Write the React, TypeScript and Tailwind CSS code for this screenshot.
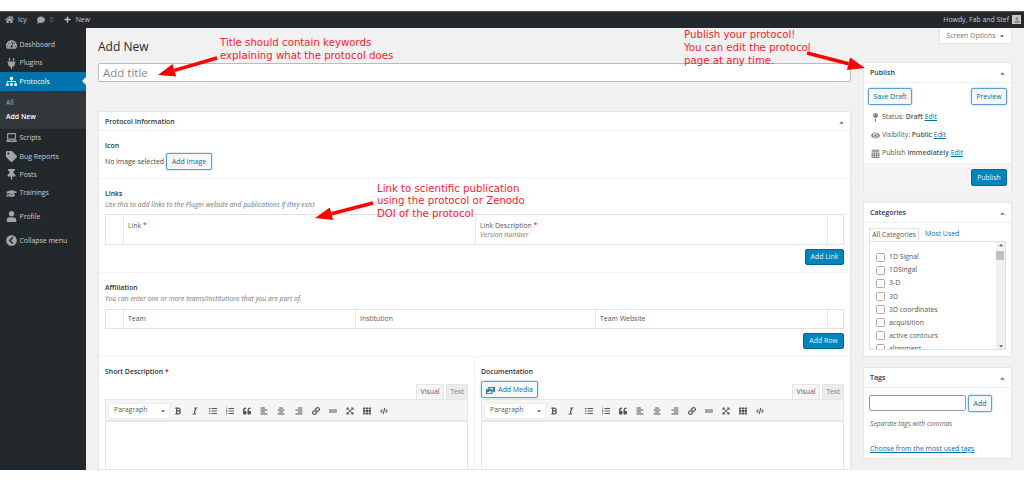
import React from "react";
import {
  FaHome, FaComment, FaPlus, FaTachometerAlt, FaPlug, FaSitemap, FaLaptop, FaTag, FaThumbtack,
  FaGraduationCap, FaUser, FaChevronCircleLeft, FaBold, FaItalic, FaListUl, FaListOl, FaQuoteLeft,
  FaAlignLeft, FaAlignCenter, FaAlignRight, FaLink, FaExpandArrowsAlt, FaTh, FaCode, FaMapPin, FaEye,
  FaCalendarAlt, FaPhotoVideo, FaCaretUp, FaCaretDown, FaGripLines,
} from "react-icons/fa";

type IconT = React.ComponentType<{ className?: string }>;

function MenuItem({ icon: Icon, label, active, className = "" }: { icon: IconT; label: string; active?: boolean; className?: string }) {
  return (
    <div className={`relative flex h-[18.4px] items-center pl-[4px] ${active ? "bg-[#0073aa] text-white" : "text-[#c9cdd0]"} ${className}`}>
      <span className="flex w-[15px] justify-center"><Icon className={`h-[11px] w-[11px] ${active ? "text-white" : "text-[#a0a5aa]"}`} /></span>
      <span className="ml-[.5px] pt-[1px]">{label}</span>
      {active && <span className="absolute right-0 top-[5px] h-0 w-0 border-y-[4px] border-r-[4px] border-y-transparent border-r-[#f1f1f1]" />}
    </div>
  );
}

function OutlineBtn({ children, className = "" }: { children: React.ReactNode; className?: string }) {
  return <div className={`flex h-[17px] items-center justify-center rounded-[2px] border border-[#5b9dd9] bg-[#f7f7f7] pt-[1px] text-[6.9px] text-[#0071a1] shadow-[0_0_2px_rgba(30,140,190,.6)] ${className}`}>{children}</div>;
}

function PrimaryBtn({ children, className = "" }: { children: React.ReactNode; className?: string }) {
  return <div className={`flex h-[16px] items-center justify-center rounded-[2px] border border-[#006799] bg-[#0085ba] pt-[1px] text-[6.9px] text-[#e8f4fa] ${className}`}>{children}</div>;
}

function SideBox({ title, className = "", children }: { title: string; className?: string; children: React.ReactNode }) {
  return (
    <section className={`border border-[#e5e5e5] bg-white ${className}`}>
      <header className="flex h-[20px] items-center justify-between border-b border-[#eeeeee] pl-[6px] pr-[5px] pt-[2px] text-[7px] font-semibold text-[#32373c]">
        <span>{title}</span><FaCaretUp className="h-[7px] w-[7px] text-[#72777c]" />
      </header>
      {children}
    </section>
  );
}

function Toolbar() {
  const icons: IconT[] = [FaBold, FaItalic, FaListUl, FaListOl, FaQuoteLeft, FaAlignLeft, FaAlignCenter, FaAlignRight, FaLink, FaGripLines, FaExpandArrowsAlt, FaTh, FaCode];
  return (
    <div className="flex h-[22px] items-center gap-[9.2px] border-b-2 border-[#e5e5e5] bg-[#f5f5f5] pl-[3px] pr-1 pt-[1px]">
      <div className="mr-[-4px] flex h-[14px] w-[60px] shrink-0 items-center justify-between bg-white pl-[5px] pr-[3px] text-[6.9px] text-[#555d66] shadow-[0_0_1px_#ccc]">
        <span>Paragraph</span><FaCaretDown className="h-[6px] w-[6px]" />
      </div>
      {icons.map((I, i) => <I key={i} className="h-[8px] w-[8px] shrink-0 text-[#50575e]" />)}
    </div>
  );
}

function Editor({ media }: { media?: boolean }) {
  return (
    <div className="flex min-w-0 flex-1 flex-col">
      <div className="flex h-[18px] justify-between">
        {media ? (
          <OutlineBtn className="h-[16px] w-[57px] gap-[3px] text-[#0073aa]"><FaPhotoVideo className="h-[9px] w-[9px]" />Add Media</OutlineBtn>
        ) : <span />}
        <div className="flex items-end gap-[2px] self-end">
          <div className="flex h-[15px] w-[28px] items-center justify-center border border-b-0 border-[#e5e5e5] bg-[#f5f5f5] pt-[1px] text-[6.9px] text-[#555d66]">Visual</div>
          <div className="flex h-[15px] w-[22px] items-center justify-center border border-b-0 border-[#e5e5e5] bg-[#ebebeb] pt-[1px] text-[6.9px] text-[#72777c]">Text</div>
        </div>
      </div>
      <div className="h-[72px] border border-[#e5e5e5] bg-white"><Toolbar /></div>
    </div>
  );
}

function Repeater({ cols, tall }: { cols: { w: string; label: string; req?: boolean; sub?: string }[]; tall?: boolean }) {
  return (
    <div className={`flex ${tall ? "h-[31px]" : "h-[20px]"} border border-[#e1e1e1] bg-white text-[6.9px] text-[#555]`}>
      <div className="w-[17px] shrink-0" />
      {cols.map((c) => (
        <div key={c.label} className={`${c.w} shrink-0 border-l border-[#e8e8e8] pl-[4px] ${tall ? "pt-[6px]" : "flex items-center pt-[1px]"}`}>
          <div>{c.label}{c.req && <span className="text-[#e00]"> *</span>}</div>
          {c.sub && <div className="mt-[-1px] italic text-[#777]">{c.sub}</div>}
        </div>
      ))}
      <div className="flex-1 border-l border-[#e8e8e8]" />
    </div>
  );
}

const cats = ["1D Signal", "1DSingal", "3-D", "3D", "3D coordinates", "acquisition", "active contours", "alignment"];

function Arrow({ x1, y1, x2, y2 }: { x1: number; y1: number; x2: number; y2: number }) {
  const a = Math.atan2(y2 - y1, x2 - x1);
  const bx = x2 - 17 * Math.cos(a), by = y2 - 17 * Math.sin(a);
  const px = -Math.sin(a) * 6.5, py = Math.cos(a) * 6.5;
  return (
    <g>
      <line x1={x1} y1={y1} x2={bx} y2={by} stroke="#f00" strokeWidth={3.4} />
      <polygon points={`${x2},${y2} ${bx + px},${by + py} ${bx - px},${by - py}`} fill="#f00" />
    </g>
  );
}

function Note({ className, lines }: { className: string; lines: string[] }) {
  return (
    <div className={`absolute whitespace-nowrap font-['DejaVu_Sans',sans-serif] text-[10.2px] leading-[12.8px] text-[#f5222d] ${className}`}>
      {lines.map((l) => <div key={l}>{l}</div>)}
    </div>
  );
}

const sectionTitle = "text-[6.9px] font-semibold leading-[12px] text-[#333]";
const hint = "text-[6.75px] italic leading-[10px] text-[#777]";

export default function App() {
  return (
    <div className="relative h-[482px] w-[1024px] overflow-hidden bg-white pt-[11px] font-['Open_Sans',sans-serif] text-[6.9px] text-[#444]">
      <div className="flex h-[17px] items-center justify-between border-t border-[#555] bg-[#23282d] pl-[5px] pr-[3px] text-[6.9px] text-[#c8cacc]">
        <div className="flex items-center">
          <FaHome className="h-[9px] w-[9px] text-[#a0a5aa]" /><span className="ml-[4px] pt-[1px]">Icy</span>
          <FaComment className="ml-[10px] h-[8px] w-[8px] text-[#a0a5aa]" /><span className="ml-[5px] pt-[1px] text-[#72777c]">0</span>
          <FaPlus className="ml-[10px] h-[7px] w-[7px] text-[#c8cacc]" /><span className="ml-[5px] pt-[1px]">New</span>
        </div>
        <div className="flex items-center gap-[3px]">
          <span className="pt-[1px]">Howdy, Fab and Stef</span>
          <span className="flex h-[9px] w-[9px] items-center justify-center bg-[#c9c9c9]"><FaUser className="h-[6px] w-[6px] text-[#8d8d8d]" /></span>
        </div>
      </div>
      <div className="flex h-[442px]">
        <aside className="w-[86px] shrink-0 bg-[#23282d] pt-[7.5px] text-[6.9px]">
          <MenuItem icon={FaTachometerAlt} label="Dashboard" />
          <MenuItem icon={FaPlug} label="Plugins" />
          <MenuItem icon={FaSitemap} label="Protocols" active />
          <div className="flex h-[38px] flex-col gap-[4px] bg-[#32373c] pl-[6px] pt-[7px]">
            <div className="text-[#a8abae]">All</div>
            <div className="font-semibold text-white">Add New</div>
          </div>
          <MenuItem icon={FaLaptop} label="Scripts" />
          <MenuItem icon={FaTag} label="Bug Reports" />
          <MenuItem icon={FaThumbtack} label="Posts" />
          <MenuItem icon={FaGraduationCap} label="Trainings" />
          <MenuItem icon={FaUser} label="Profile" className="mt-[5.5px]" />
          <MenuItem icon={FaChevronCircleLeft} label="Collapse menu" className="mt-[5.5px]" />
        </aside>
        <main className="flex min-w-0 flex-1 gap-[12px] bg-[#f1f1f1] px-[12px]">
          <div className="w-[753px] shrink-0 pt-[10px]">
            <h1 className="flex h-[18px] items-center text-[12px] font-normal text-[#23282d]">Add New</h1>
            <div className="mt-[7px] flex h-[19px] items-center rounded-[2px] border border-[#bbb] bg-white pl-[4px] text-[11.5px] text-[#888]">Add title</div>
            <section className="mt-[29px] h-[359px] overflow-hidden border border-[#e5e5e5] bg-white">
              <header className="flex h-[19px] items-center justify-between border-b border-[#eee] pl-[6px] pr-[5px] pt-[2px] font-semibold text-[#32373c]">
                <span>Protocol Information</span><FaCaretUp className="h-[7px] w-[7px] text-[#72777c]" />
              </header>
              <div className="h-[48px] border-b border-[#f4f4f4] px-[6px] pt-[9px]">
                <div className={sectionTitle}>Icon</div>
                <div className="mt-[1px] flex items-center gap-[2px]">
                  <span className="pt-[2px]">No image selected</span>
                  <OutlineBtn className="w-[46px]">Add Image</OutlineBtn>
                </div>
              </div>
              <div className="h-[94px] border-b border-[#f4f4f4] px-[6px] pt-[9px]">
                <div className={sectionTitle}>Links</div>
                <div className={hint}>Use this to add links to the Plugin website and publications if they exist</div>
                <div className="mt-[4px]">
                  <Repeater tall cols={[{ w: "w-[352px]", label: "Link", req: true }, { w: "w-[352px]", label: "Link Description", req: true, sub: "Version number" }]} />
                </div>
                <div className="mt-[4px] flex justify-end"><PrimaryBtn className="w-[39px]">Add Link</PrimaryBtn></div>
              </div>
              <div className="h-[84px] border-b border-[#f4f4f4] px-[6px] pt-[9px]">
                <div className={sectionTitle}>Affiliation</div>
                <div className={hint}>You can enter one or more teams/institutions that you are part of.</div>
                <div className="mt-[5px]">
                  <Repeater cols={[{ w: "w-[232px]", label: "Team" }, { w: "w-[240px]", label: "Institution" }, { w: "w-[232px]", label: "Team Website" }]} />
                </div>
                <div className="mt-[4px] flex justify-end"><PrimaryBtn className="w-[41px]">Add Row</PrimaryBtn></div>
              </div>
              <div className="flex px-[6px]">
                <div className="w-[370px] border-r border-[#f0f0f0] pr-[6px] pt-[9px]">
                  <div className={`h-[14px] ${sectionTitle}`}>Short Description <span className="text-[#e00]">*</span></div>
                  <div className="mt-[1px] flex"><Editor /></div>
                </div>
                <div className="flex-1 pl-[6px] pt-[9px]">
                  <div className={`h-[14px] ${sectionTitle}`}>Documentation</div>
                  <div className="mt-[1px] flex"><Editor media /></div>
                </div>
              </div>
            </section>
          </div>
          <div className="w-[149px] shrink-0">
            <div className="ml-auto flex h-[16px] w-[73px] items-center justify-center gap-[3px] border border-t-0 border-[#e5e5e5] bg-white pt-[1px] text-[6.9px] text-[#72777c]">Screen Options <FaCaretDown className="h-[6px] w-[6px] text-[#555]" /></div>
            <SideBox title="Publish" className="mt-[18px] h-[130px]">
              <div className="flex justify-between px-[4px] pt-[5px]">
                <OutlineBtn className="w-[44px]">Save Draft</OutlineBtn>
                <OutlineBtn className="w-[36px]">Preview</OutlineBtn>
              </div>
              <div className="flex flex-col gap-[7.6px] pl-[4px] pt-[7px] leading-[10.5px] text-[#50575e]">
                <div className="flex items-center"><span className="flex w-[14px] justify-center"><FaMapPin className="h-[9px] w-[9px] text-[#82878c]" /></span>Status:&nbsp;<b className="font-semibold">Draft</b>&nbsp;<u className="text-[#0073aa]">Edit</u></div>
                <div className="flex items-center"><span className="flex w-[14px] justify-center"><FaEye className="h-[9px] w-[9px] text-[#82878c]" /></span>Visibility:&nbsp;<b className="font-semibold">Public</b>&nbsp;<u className="text-[#0073aa]">Edit</u></div>
                <div className="flex items-center"><span className="flex w-[14px] justify-center"><FaCalendarAlt className="h-[9px] w-[9px] text-[#82878c]" /></span>Publish&nbsp;<b className="font-semibold">immediately</b>&nbsp;<u className="text-[#0073aa]">Edit</u></div>
              </div>
              <div className="mt-[4px] flex h-[30px] justify-end border-t border-[#eee] bg-[#f5f5f5] pr-[4px] pt-[5px]">
                <PrimaryBtn className="h-[17px] w-[36px]">Publish</PrimaryBtn>
              </div>
            </SideBox>
            <SideBox title="Categories" className="mt-[10px] h-[155px]">
              <div className="mt-[5px] flex h-[13px] items-end pl-[5px]">
                <div className="flex h-[13px] w-[50px] items-center justify-center border border-b-0 border-[#e1e1e1] text-[#555]">All Categories</div>
                <div className="ml-[6px] flex h-[13px] items-center text-[#0073aa]">Most Used</div>
              </div>
              <div className="relative mx-[5px] h-[109px] overflow-hidden border border-[#e1e1e1] bg-white pl-[6px] pt-[9px] text-[#555]">
                {cats.map((c) => (
                  <div key={c} className="flex h-[13.07px] items-center gap-[4px]">
                    <span className="h-[9px] w-[9px] shrink-0 rounded-[1.5px] border border-[#aaa] bg-white" />{c}
                  </div>
                ))}
                <div className="absolute inset-y-0 right-0 flex w-[9px] flex-col items-center justify-between bg-[#f1f1f1] text-[#555]">
                  <FaCaretUp className="h-[6px] w-[6px]" />
                  <div className="absolute left-0 top-[9px] h-[9px] w-[8px] bg-[#c1c1c1]" />
                  <FaCaretDown className="h-[6px] w-[6px]" />
                </div>
              </div>
            </SideBox>
            <SideBox title="Tags" className="mt-[10px] h-[92px]">
              <div className="flex gap-[2px] px-[5px] pt-[7px]">
                <div className="h-[16px] w-[97px] rounded-[2px] border border-[#999] bg-white" />
                <OutlineBtn className="h-[16px] w-[24px]">Add</OutlineBtn>
              </div>
              <div className="pl-[6px] pt-[7px] text-[6.75px] italic leading-[10px] text-[#666]">Separate tags with commas</div>
              <div className="pl-[6px] pt-[15px] leading-[10px] text-[#0073aa] underline">Choose from the most used tags</div>
            </SideBox>
          </div>
        </main>
      </div>
      <svg className="pointer-events-none absolute inset-0" width="1024" height="482" viewBox="0 0 1024 482">
        <Arrow x1={217} y1={58} x2={158} y2={75} />
        <Arrow x1={373} y1={203} x2={315} y2={218} />
        <Arrow x1={807} y1={53} x2={865} y2={68} />
      </svg>
      <Note className="left-[220px] top-[37px]" lines={["Title should contain keywords", "explaining what the protocol does"]} />
      <Note className="left-[377px] top-[182.5px]" lines={["Link to scientific publication", "using the protocol or Zenodo", "DOI of the protocol"]} />
      <Note className="left-[684px] top-[29px]" lines={["Publish your protocol!", "You can edit the protocol", "page at any time."]} />
    </div>
  );
}
